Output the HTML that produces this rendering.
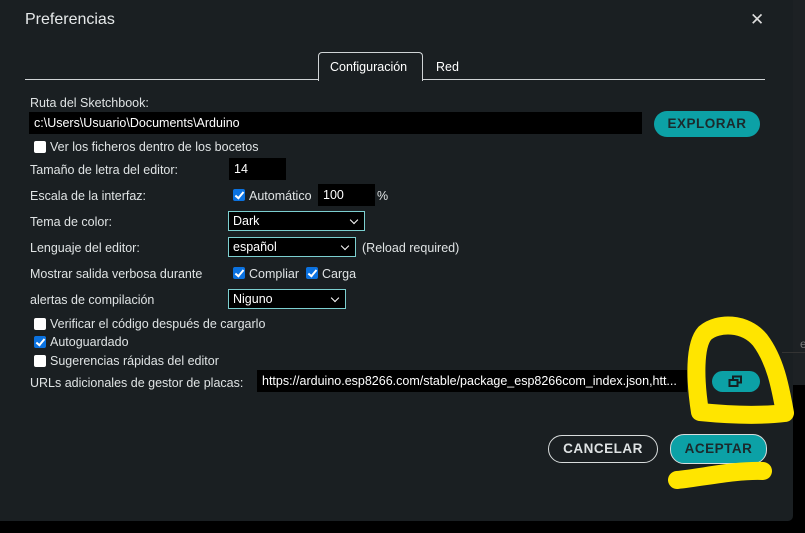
<!DOCTYPE html>
<html><head><meta charset="utf-8"><style>
*{box-sizing:border-box;margin:0;padding:0}
body{width:805px;height:533px;background:#000;font-family:"Liberation Sans",Arial,sans-serif;color:#dfe3e4;font-size:12.5px;position:relative;overflow:hidden}
.dlg{position:absolute;left:0;top:0;width:793px;height:521px;background:#1a1f22;border-radius:0 0 5px 0}
.side{position:absolute;left:793px;top:0;width:12px;height:385px;background:#1d2124}
.a{position:absolute;white-space:nowrap}
.inp{position:absolute;background:#000;color:#fff;padding-left:5px;line-height:22px;height:22px}
.sel{position:absolute;background:#000;border:1px solid #7ccfd0;color:#fff;padding-left:4px;height:20px;line-height:18px}
.sel:after{content:"";position:absolute;right:7px;top:5px;width:5px;height:5px;border-right:1.5px solid #fff;border-bottom:1.5px solid #fff;transform:rotate(45deg)}
.cb{position:absolute;width:12px;height:12px;background:#fff;border-radius:2px}
.cb.on{background:#0b72e0}
.cb.on:after{content:"";position:absolute;left:4px;top:1px;width:3px;height:7px;border-right:2px solid #fff;border-bottom:2px solid #fff;transform:rotate(40deg)}
.btn{position:absolute;border-radius:14px;font-weight:bold;text-align:center;letter-spacing:.5px;font-size:13.5px}
</style></head><body>
<div class="dlg"></div><div class="side"></div>
<div class="a" style="left:782px;top:352px;width:23px;height:1px;background:#333"></div>
<div class="a" style="left:800px;top:337px;color:#777;font-size:12px">e</div>
<div class="a" style="left:25px;top:11px;font-size:16px;color:#e6e9ea">Preferencias</div>
<div class="a" style="left:750px;top:10px;font-size:17px;color:#ddd">✕</div>
<div class="a" style="left:25px;top:79px;width:740px;height:1px;background:#d0d4d6"></div>
<div class="a" style="left:318px;top:52px;width:105px;height:29px;background:#1a1f22;border:1px solid #d0d4d6;border-bottom:none;border-radius:4px 4px 0 0"></div>
<div class="a" style="left:330px;top:60px;color:#fff">Configuración</div>
<div class="a" style="left:436px;top:60px;color:#fff">Red</div>
<div class="a" style="left:30px;top:96px">Ruta del Sketchbook:</div>
<div class="inp" style="left:29px;top:112px;width:613px">c:\Users\Usuario\Documents\Arduino</div>
<div class="btn" style="left:654px;top:111px;width:106px;height:26px;line-height:26px;background:#0ca1a6;color:#1b2a2c">EXPLORAR</div>
<div class="cb" style="left:34px;top:141px"></div><div class="a" style="left:50px;top:140px">Ver los ficheros dentro de los bocetos</div>
<div class="a" style="left:30px;top:163px">Tamaño de letra del editor:</div>
<div class="inp" style="left:229px;top:158px;width:57px">14</div>
<div class="a" style="left:30px;top:189px">Escala de la interfaz:</div>
<div class="cb on" style="left:233px;top:189px"></div><div class="a" style="left:249px;top:189px">Automático</div>
<div class="inp" style="left:318px;top:184px;width:57px">100</div><div class="a" style="left:377px;top:189px">%</div>
<div class="a" style="left:30px;top:215px">Tema de color:</div>
<div class="sel" style="left:228px;top:211px;width:137px">Dark</div>
<div class="a" style="left:30px;top:241px">Lenguaje del editor:</div>
<div class="sel" style="left:228px;top:237px;width:128px">español</div>
<div class="a" style="left:362px;top:241px">(Reload required)</div>
<div class="a" style="left:30px;top:267px">Mostrar salida verbosa durante</div>
<div class="cb on" style="left:233px;top:267px"></div><div class="a" style="left:249px;top:267px">Compliar</div>
<div class="cb on" style="left:306px;top:267px"></div><div class="a" style="left:322px;top:267px">Carga</div>
<div class="a" style="left:30px;top:293px">alertas de compilación</div>
<div class="sel" style="left:228px;top:289px;width:118px">Niguno</div>
<div class="cb" style="left:34px;top:318px"></div><div class="a" style="left:50px;top:317px">Verificar el código después de cargarlo</div>
<div class="cb on" style="left:34px;top:336px"></div><div class="a" style="left:50px;top:335px">Autoguardado</div>
<div class="cb" style="left:34px;top:355px"></div><div class="a" style="left:50px;top:354px">Sugerencias rápidas del editor</div>
<div class="a" style="left:30px;top:376px">URLs adicionales de gestor de placas:</div>
<div class="inp" style="left:257px;top:370px;width:430px;overflow:hidden">https://arduino.esp8266.com/stable/package_esp8266com_index.json,htt...</div>
<div class="btn" style="left:712px;top:371px;width:48px;height:21px;background:#0ca1a6"></div>
<svg class="a" style="left:728px;top:375px" width="16" height="14" viewBox="0 0 16 14"><rect x="5" y="1.5" width="8" height="6" fill="none" stroke="#152022" stroke-width="2"/><rect x="1.5" y="5" width="8" height="6" fill="#0ca1a6" stroke="#152022" stroke-width="2"/></svg>
<div class="btn" style="left:548px;top:435px;width:110px;height:28px;line-height:25px;border:1.5px solid #d8dcdc;color:#dfe3e4">CANCELAR</div>
<div class="btn" style="left:670px;top:434px;width:97px;height:30px;line-height:28px;background:#0ca1a6;border:1.5px solid #d8dcdc;color:#1b2a2c">ACEPTAR</div>
<svg class="a" style="left:0;top:0" width="805" height="533"><g fill="none" stroke="#ffe500" stroke-width="18" stroke-linecap="round" stroke-linejoin="round"><path d="M700 412 C695 380 694 345 705 333 C718 322 745 322 760 340 C775 360 780 385 785 413 C760 416 730 415 700 412"/><path d="M677 480 C705 477 735 470 763 471"/></g></svg>
</body></html>
